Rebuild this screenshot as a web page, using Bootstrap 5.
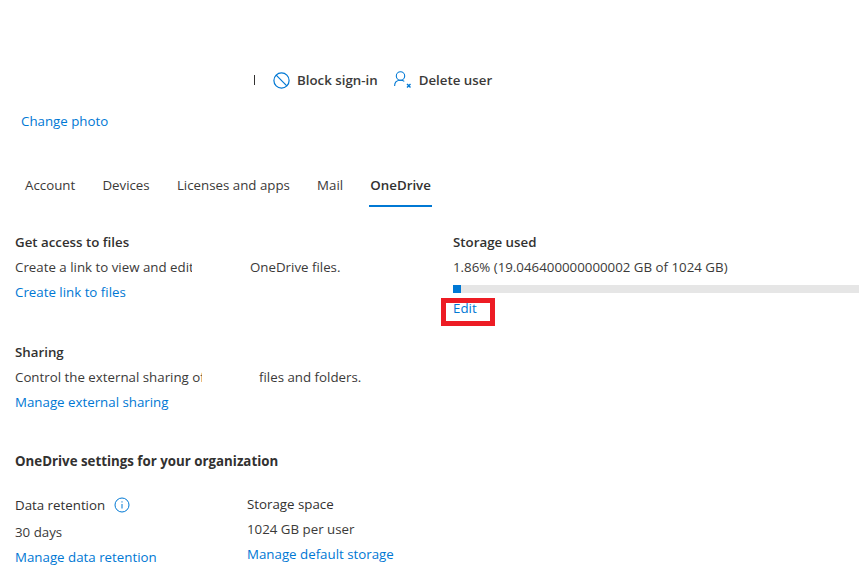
<!DOCTYPE html>
<html lang="en">
<head>
  <meta charset="UTF-8">
  <meta name="viewport" content="width=device-width, initial-scale=1.0">
  <title>OneDrive</title>
  <link href="https://cdn.jsdelivr.net/npm/bootstrap@5.3.0/dist/css/bootstrap.min.css" rel="stylesheet">
  <style>
    html, body { height: 100%; }
    body { font-family: "Open Sans", "Noto Sans", sans-serif; font-size: 13.3px; line-height: 20px; color: #3b3a39; background: #fff; overflow: hidden; }
    a { color: #0078d4; text-decoration: none; }
    .page-wrap { position: relative; height: 587px; padding: 70px 0 0 15px; overflow: hidden; }
    .tool-bar { height: 20px; padding-left: 239px; font-weight: 600; }
    .tool-sep { width: 1px; height: 10px; background: #323130; margin-right: 18px; }
    .tool-icon-a { margin-right: 7px; }
    .tool-icon-b { margin: 0 7px 0 16px; }
    .photo-link { margin-top: 21px; padding-left: 6px; }
    .tab-row { margin-top: 44px; padding-left: 10px; gap: 27.2px; }
    .tab-item { height: 32px; }
    .tab-item.active { font-weight: 600; border-bottom: 2px solid #0078d4; margin: 0 -1px; padding: 0 1px; color: #323130; }
    .sect-title { font-weight: 600; color: #323130; }
    .sect-line { margin-top: 5px; }
    .sect-line + a { display: block; margin-top: 5px; }
    .files-row { margin-top: 25px; }
    .files-left { width: 438px; flex: none; }
    .usage-track { height: 8px; background: #e6e6e6; margin-top: 8px; width: 406px; }
    .usage-fill { height: 8px; background: #0078d4; }
    .edit-link { display: block; margin-top: 5px; }
    .gap-text { margin-left: 58px; }
    .clip-a { display: inline-block; width: 177px; overflow: hidden; white-space: nowrap; vertical-align: bottom; }
    .clip-b { display: inline-block; width: 187px; overflow: hidden; white-space: nowrap; vertical-align: bottom; }
    .clip-b + .gap-text { margin-left: 57px; }
    .red-box { position: absolute; left: 441px; top: 298px; width: 54px; height: 28px; border: 5px solid #ed1c24; }
    .org-title { margin-top: 39px; font-weight: 700; color: #323130; }
    .org-cols { margin-top: 23px; }
    .org-head { font-weight: 500; color: #323130; }
    .org-left { width: 232px; flex: none; padding-top: 1px; }
    .org-left svg { margin-left: 1px; }
    .org-left .sect-line { margin-top: 7px; }
    .org-right .sect-line { margin-top: 5px; }
    .org-cols a { display: block; margin-top: 5px; }
  </style>
</head>
<body>
  <div class="page-wrap">
    <div class="tool-bar d-flex align-items-center">
      <span class="tool-sep"></span>
      <svg width="17" height="17" viewBox="0 0 17 17" fill="none" stroke="#0078d4" stroke-width="1.2" class="tool-icon-a"><circle cx="8.5" cy="8.500" r="7.600"/><path d="M3.200 3.200l10.600 10.600"/></svg>
      <span>Block sign-in</span>
      <svg width="18" height="18" viewBox="0 0 18 18" fill="none" stroke="#0078d4" stroke-width="1.100" class="tool-icon-b"><circle cx="6.500" cy="5" r="4.200"/><path d="M.6 15c0-3.800 2.500-5.800 5.900-5.800 1.500 0 2.800.4 3.800 1.200"/><path d="M13 13l3.500 3.500M16.500 13L13 16.500" stroke-width="1.400"/></svg>
      <span>Delete user</span>
    </div>
    <div class="photo-link"><a href="#">Change photo</a></div>

    <div class="tab-row d-flex">
      <div class="tab-item">Account</div>
      <div class="tab-item">Devices</div>
      <div class="tab-item">Licenses and apps</div>
      <div class="tab-item">Mail</div>
      <div class="tab-item active">OneDrive</div>
    </div>

    <div class="files-row d-flex">
      <div class="files-left">
        <div class="sect-title">Get access to files</div>
        <div class="sect-line"><span class="clip-a">Create a link to view and edit</span><span class="gap-text">OneDrive files.</span></div>
        <a href="#">Create link to files</a>
      </div>
      <div class="flex-grow-1">
        <div class="sect-title">Storage used</div>
        <div class="sect-line">1.86% (19.046400000000002 GB of 1024 GB)</div>
        <div class="usage-track"><div class="usage-fill" style="width: 1.86%"></div></div>
        <a href="#" class="edit-link">Edit</a>
      </div>
    </div>

    <div class="sect-title mt-4">Sharing</div>
    <div class="sect-line"><span class="clip-b">Control the external sharing of</span><span class="gap-text">files and folders.</span></div>
    <a href="#">Manage external sharing</a>

    <div class="org-title">OneDrive settings for your organization</div>
    <div class="org-cols d-flex">
      <div class="org-left">
        <div class="d-flex align-items-center gap-2">
          <span class="org-head">Data retention</span>
          <svg width="16" height="16" viewBox="0 0 16 16" fill="none" stroke="#0078d4" stroke-width="1"><circle cx="8" cy="8" r="7"/><path d="M8 7v4.500M8 4.300v1.200"/></svg>
        </div>
        <div class="sect-line">30 days</div>
        <a href="#">Manage data retention</a>
      </div>
      <div class="org-right">
        <div class="org-head">Storage space</div>
        <div class="sect-line">1024 GB per user</div>
        <a href="#">Manage default storage</a>
      </div>
    </div>

    <div class="red-box"></div>
  </div>
</body>
</html>
